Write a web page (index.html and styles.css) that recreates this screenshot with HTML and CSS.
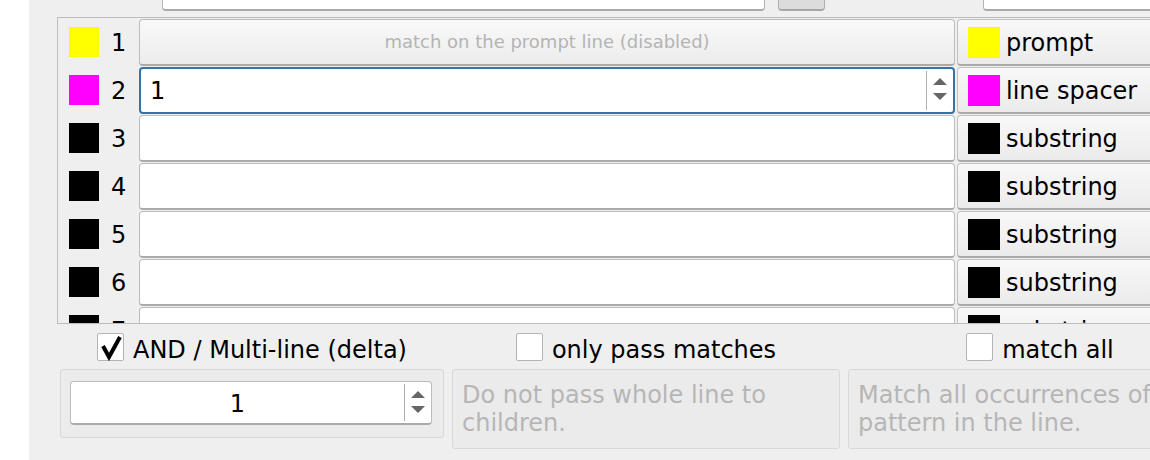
FILE: index.html
```html
<!DOCTYPE html>
<html lang="en">
<head>
  <meta charset="UTF-8">
  <title>Matchers</title>
  <link rel="stylesheet" href="styles.css">
</head>
<body>
  <div class="panel">
    <div class="topbar">
      <div class="top-input wide"></div>
      <div class="top-button"></div>
      <div class="top-input rest"></div>
    </div>

    <div class="scroll">
      <div class="row">
        <span class="swatch yellow"></span>
        <span class="num">1</span>
        <div class="field disabled">match on the prompt line (disabled)</div>
        <div class="kind"><span class="swatch big yellow"></span>prompt</div>
      </div>
      <div class="row">
        <span class="swatch magenta"></span>
        <span class="num">2</span>
        <div class="field spin focus">
          <span class="spin-text">1</span>
          <span class="arrows">
            <svg width="16" height="26" viewBox="0 0 16 26"><path d="M1 8 L8 1 L15 8 Z M1 16 L15 16 L8 23 Z" fill="#666"/></svg>
          </span>
        </div>
        <div class="kind"><span class="swatch big magenta"></span>line spacer</div>
      </div>
      <div class="row">
        <span class="swatch"></span>
        <span class="num">3</span>
        <div class="field"></div>
        <div class="kind"><span class="swatch big"></span>substring</div>
      </div>
      <div class="row">
        <span class="swatch"></span>
        <span class="num">4</span>
        <div class="field"></div>
        <div class="kind"><span class="swatch big"></span>substring</div>
      </div>
      <div class="row">
        <span class="swatch"></span>
        <span class="num">5</span>
        <div class="field"></div>
        <div class="kind"><span class="swatch big"></span>substring</div>
      </div>
      <div class="row">
        <span class="swatch"></span>
        <span class="num">6</span>
        <div class="field"></div>
        <div class="kind"><span class="swatch big"></span>substring</div>
      </div>
      <div class="row">
        <span class="swatch"></span>
        <span class="num">7</span>
        <div class="field"></div>
        <div class="kind"><span class="swatch big"></span>substring</div>
      </div>
    </div>

    <div class="options">
      <div class="option">
        <label class="check">
          <span class="box">
            <svg width="27" height="28" viewBox="0 0 27 28"><path d="M6 13 L12 24 L23 4" fill="none" stroke="#000" stroke-width="4" stroke-linejoin="miter"/></svg>
          </span>
          AND / Multi-line (delta)
        </label>
        <div class="group short">
          <div class="field spin small">
            <span class="spin-text center">1</span>
            <span class="arrows">
              <svg width="16" height="26" viewBox="0 0 16 26"><path d="M1 8 L8 1 L15 8 Z M1 16 L15 16 L8 23 Z" fill="#666"/></svg>
            </span>
          </div>
        </div>
      </div>
      <div class="option">
        <label class="check"><span class="box"></span>only pass matches</label>
        <div class="group note">Do not pass whole line to children.</div>
      </div>
      <div class="option">
        <label class="check"><span class="box"></span>match all</label>
        <div class="group note">Match all occurrences of pattern in the line.</div>
      </div>
    </div>
  </div>
</body>
</html>
```

FILE: styles.css
```css
* {
  box-sizing: border-box;
  margin: 0;
  padding: 0;
}
body {
  background: #fff;
  font-family: "DejaVu Sans", sans-serif;
  font-size: 24px;
  color: #000;
  width: 1150px;
  height: 460px;
  overflow: hidden;
}
.panel {
  margin-left: 29px;
  width: 1121px;
  height: 460px;
  background: #efefef;
  overflow: hidden;
}
.topbar {
  height: 11px;
  display: flex;
  align-items: flex-end;
  overflow: hidden;
}
.top-input {
  height: 30px;
  background: #fff;
  border: 1px solid #b4b4b4;
  border-bottom: 2px solid #a9a9a9;
  border-radius: 0 0 4px 4px;
  flex-shrink: 0;
}
.top-input.wide {
  margin-left: 133px;
  width: 603px;
}
.top-input.rest {
  margin-left: 158px;
  width: 200px;
}
.top-button {
  margin-left: 13px;
  width: 47px;
  height: 30px;
  flex-shrink: 0;
  background: #dcdcdc;
  border: 1px solid #b0b0b0;
  border-bottom: 2px solid #a6a6a6;
  border-radius: 0 0 4px 4px;
}
.scroll {
  margin-top: 6px;
  margin-left: 28px;
  height: 307px;
  border: 1px solid #bdbdbd;
  border-right: none;
  overflow: hidden;
}
.row {
  display: flex;
  align-items: center;
  height: 48px;
  flex-shrink: 0;
}
.swatch {
  display: inline-block;
  width: 30px;
  height: 30px;
  margin-left: 11px;
  background: #000;
  flex-shrink: 0;
}
.swatch.yellow {
  background: #ffff00;
}
.swatch.magenta {
  background: #ff00ff;
}
.swatch.big {
  width: 32px;
  height: 31px;
  margin-left: 0;
  margin-right: 6px;
}
.num {
  width: 40px;
  padding-left: 12px;
  padding-top: 2px;
  flex-shrink: 0;
}
.field {
  width: 816px;
  height: 47px;
  flex-shrink: 0;
  background: #fff;
  border: 1px solid #bcbcbc;
  border-bottom: 2px solid #aaaaaa;
  border-radius: 4px;
}
.field.disabled {
  background: linear-gradient(#f9f9f9, #ececec);
  color: #b4b4b4;
  font-size: 18px;
  display: flex;
  align-items: center;
  justify-content: center;
}
.field.spin {
  display: flex;
  align-items: stretch;
}
.field.focus {
  border: 2px solid #3473a8;
}
.spin-text {
  flex: 1;
  display: flex;
  align-items: center;
  padding-left: 9px;
  padding-top: 2px;
}
.spin-text.center {
  justify-content: center;
  padding-left: 0;
}
.arrows {
  width: 27px;
  border-left: 1px solid #b0b0b0;
  display: flex;
  align-items: center;
  justify-content: center;
  margin: 2px 0;
}
.kind {
  margin-left: 2px;
  width: 280px;
  height: 47px;
  flex-shrink: 0;
  display: flex;
  align-items: center;
  padding-left: 10px;
  padding-top: 2px;
  background: linear-gradient(#f8f8f8, #ebebeb);
  border: 1px solid #c2c2c2;
  border-bottom: 2px solid #aaaaaa;
  border-radius: 4px;
}
.options {
  display: grid;
  grid-template-columns: 384px 388px 384px;
  column-gap: 8px;
  margin-left: 31px;
  padding-top: 9px;
}
.option {
  display: flex;
  flex-direction: column;
  align-items: center;
}
.check {
  display: flex;
  align-items: center;
  gap: 9px;
  height: 28px;
  margin-bottom: 8px;
  white-space: nowrap;
  padding-top: 5px;
}
.box {
  width: 27px;
  height: 28px;
  margin-top: -5px;
  background: #fff;
  border: 1px solid #b4b4b4;
  border-radius: 2px;
  display: flex;
}
.box svg {
  margin: -1px;
}
.group {
  width: 100%;
  background: #ebebeb;
  border: 1px solid #d8d8d8;
  border-radius: 3px;
}
.group.short {
  height: 69px;
  padding: 11px 11px 0 9px;
}
.field.small {
  width: 100%;
  height: 44px;
}
.group.note {
  height: 80px;
  padding: 11px 9px;
  color: #b6b6b6;
  line-height: 28px;
}
```
